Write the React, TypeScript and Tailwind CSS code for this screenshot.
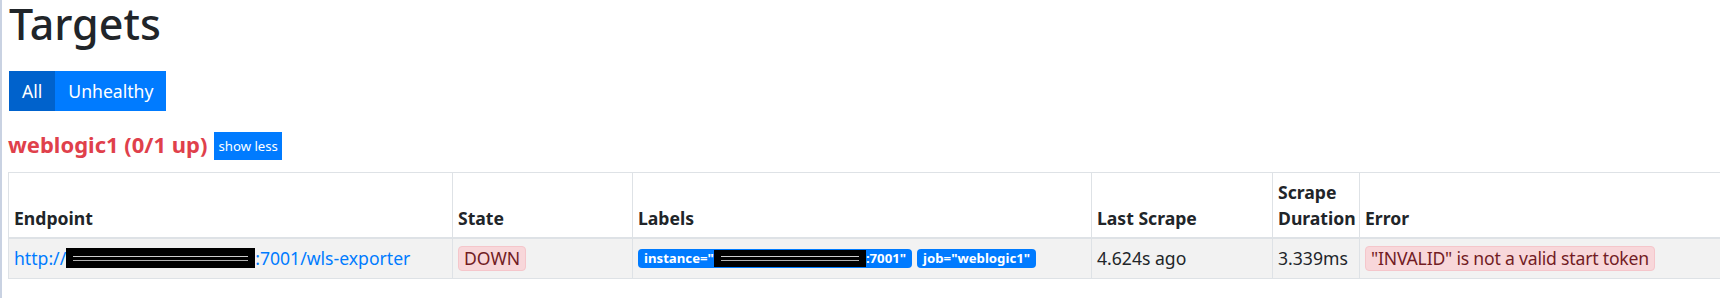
import React from "react";

function Redact({ w, h, className = "" }: { w: string; h: string; className?: string }) {
  return (
    <span className={`inline-flex flex-col justify-center gap-[3px] bg-black align-middle px-[7px] ${w} ${h} ${className}`}>
      <span className="block h-px w-full bg-white/80" />
      <span className="block h-px w-full bg-white/70" />
    </span>
  );
}

const th = "border border-[#dee2e6] border-b-2 px-[5px] pt-[6px] pb-[5px] text-left align-bottom font-bold";
const td = "border border-[#dee2e6] px-[5px] pt-[6px] pb-[7px] align-top";

export default function App() {
  return (
    <div
      className="h-[298px] w-[1720px] overflow-hidden border-l-2 border-[#c9d2e2] bg-white text-[17.6px] leading-[26.4px] text-[#212529]"
      style={{ fontFamily: '"Noto Sans", "Open Sans", sans-serif' }}
    >
      <div className="pl-[6px]">
        <h1 className="pl-[1px] text-[43px] font-medium leading-[48px] text-[#212529]">Targets</h1>
        <div className="mt-[23px] flex pl-[1px]">
          <button className="h-[40px] bg-[#0062cc] px-[13px] text-[17.6px] text-white">All</button>
          <button className="h-[40px] bg-[#007bff] px-[13px] text-[17.6px] text-white">Unhealthy</button>
        </div>
        <div className="mt-[21px] flex items-start gap-[7px]">
          <span className="-mt-[1px] text-[22px] font-bold leading-[26.4px] text-[#e0404b]">weblogic1 (0/1 up)</span>
          <button className="h-[28px] bg-[#007bff] px-[4px] text-[13.2px] leading-[28px] text-white">show less</button>
        </div>
        <table className="mt-[12px] w-[1740px] table-fixed border-collapse">
          <colgroup>
            <col className="w-[444px]" />
            <col className="w-[180px]" />
            <col className="w-[459px]" />
            <col className="w-[181px]" />
            <col className="w-[87px]" />
            <col />
          </colgroup>
          <thead>
            <tr>
              <th className={th}>Endpoint</th>
              <th className={th}>State</th>
              <th className={th}>Labels</th>
              <th className={th}>Last Scrape</th>
              <th className={th}>Scrape Duration</th>
              <th className={th}>Error</th>
            </tr>
          </thead>
          <tbody>
            <tr className="bg-[#f2f2f2]">
              <td className={`${td} whitespace-nowrap`}>
                <a className="text-[#007bff]">
                  http://
                  <Redact w="w-[189px]" h="h-[20px]" className="-mt-[4px]" />
                  :7001/wls-exporter
                </a>
              </td>
              <td className={td}>
                <span className="inline-block rounded-[4px] border border-[#f5c6cb] bg-[#f8d7da] px-[5px] leading-[23px] text-[#721c24]">
                  DOWN
                </span>
              </td>
              <td className={`${td} whitespace-nowrap`}>
                <span className="mt-[4px] inline-flex h-[19px] items-center rounded-[4px] bg-[#007bff] px-[6px] align-top text-[13.2px] font-bold leading-[13px] text-white">
                  instance="
                  <Redact w="w-[152px]" h="h-[17px]" />
                  :7001"
                </span>
                <span className="ml-[5px] mt-[4px] inline-flex h-[19px] items-center rounded-[4px] bg-[#007bff] px-[6px] align-top text-[13.2px] font-bold leading-[13px] text-white">
                  job="weblogic1"
                </span>
              </td>
              <td className={td}>4.624s ago</td>
              <td className={td}>3.339ms</td>
              <td className={`${td} whitespace-nowrap`}>
                <span className="inline-block rounded-[4px] border border-[#f5c6cb] bg-[#f8d7da] px-[5px] leading-[23px] tracking-[-0.2px] text-[#721c24]">
                  "INVALID" is not a valid start token
                </span>
              </td>
            </tr>
          </tbody>
        </table>
      </div>
    </div>
  );
}
